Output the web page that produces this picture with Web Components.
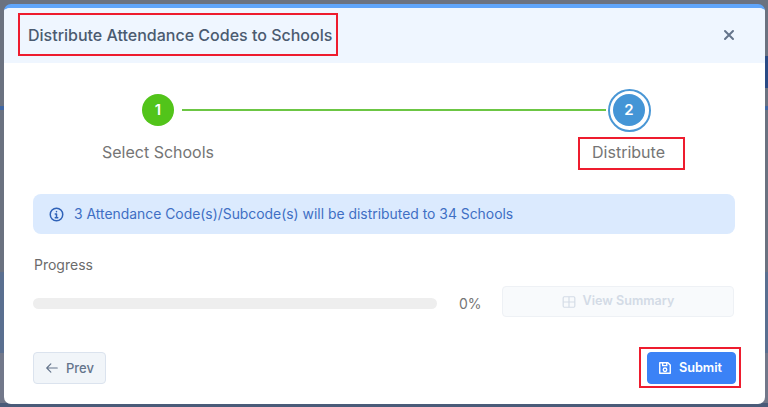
<!DOCTYPE html>
<html><head><meta charset="utf-8"><style>
html,body{margin:0;padding:0;height:407px;overflow:hidden}
body{font-family:Inter,"Noto Sans",sans-serif;background:#6b7280}
</style></head><body>
<app-backdrop>
<dist-modal>
<step-bar slot="steps"></step-bar>
<info-alert slot="alert">3 Attendance Code(s)/Subcode(s) will be distributed to 34 Schools</info-alert>
<progress-row slot="progress"></progress-row>
<ui-btn slot="prev" kind="prev" style="margin-top:5px"><svg slot="icon" width="14" height="14" viewBox="0 0 24 24" fill="none" stroke="currentColor" stroke-width="2" stroke-linecap="round" stroke-linejoin="round"><path d="M21 12H3M10 5l-7 7 7 7"/></svg>Prev</ui-btn>
<mark-box slot="submit" style="padding:3px 3px 2px 6px;margin-right:-6px"><ui-btn kind="primary" style="padding-right:3px"><svg slot="icon" width="14" height="14" viewBox="0 0 24 24" fill="none" stroke="currentColor" stroke-width="2.4" stroke-linejoin="round"><path d="M3 3h14l4 4v14H3z"/><path d="M8 3v5h7V3"/><circle cx="12" cy="15" r="3"/></svg>Submit</ui-btn></mark-box>
</dist-modal>
</app-backdrop>
<script>
function def(name,html){
  customElements.define(name,class extends HTMLElement{
    constructor(){super();this.attachShadow({mode:'open'}).innerHTML=html;}
  });
}
def('app-backdrop',`<style>:host{display:block;box-sizing:border-box;width:768px;height:407px;padding:4px 3px 3px 4px;
background:
 linear-gradient(#2a4a84 0 0) right 0 top 56px/4px 32px no-repeat,
 linear-gradient(#6b7280 0 106px,#3f66a3 106px 110px,#6b7280 110px 272px,#5a6f90 272px 353px,#72788a 353px 403px,#4a5b79 403px 407px)}</style><slot></slot>`);
def('dist-modal',`<style>
:host{display:flex;flex-direction:column;height:399.5px;background:#fff;border-radius:7px;overflow:hidden;border-top:4px solid #60a5fa;box-sizing:border-box}
header{flex:none;height:55px;background:#eff6ff;display:flex;align-items:center;justify-content:space-between;padding:0 30.5px 0 14px;box-sizing:border-box}
h1{margin:0;font:500 16px/16px Inter,sans-serif;color:#4b5b70;white-space:nowrap}
.x{color:#64748b;display:flex;margin-bottom:2px}
main{flex:1;display:flex;flex-direction:column;padding:25px 30px 0 29px}
::slotted([slot=alert]){margin-top:24px}
::slotted([slot=progress]){margin-top:21px}
footer{display:flex;justify-content:space-between;align-items:flex-start;margin-top:30px}
</style>
<header><mark-box style="padding:11.5px 3.5px 11.5px 8px;margin-bottom:2px"><h1>Distribute Attendance Codes to Schools</h1></mark-box>
<span class="x"><svg width="12" height="12" viewBox="0 0 12 12" fill="none" stroke="currentColor" stroke-width="2" stroke-linecap="round"><path d="M2 2l8 8M10 2l-8 8"/></svg></span></header>
<main><slot name="steps"></slot><slot name="alert"></slot><slot name="progress"></slot>
<footer><slot name="prev"></slot><slot name="submit"></slot></footer></main>`);
def('mark-box',`<style>:host{display:inline-flex;border:2px solid #ee1c2e;box-sizing:border-box}</style><slot></slot>`);
def('step-bar',`<style>
:host{display:grid;grid-template-columns:110px 1fr 110px;grid-template-rows:44px auto;margin:0 0 0 70px;width:581px;row-gap:10px;justify-items:center;align-items:start;font:400 16px/20px Inter,sans-serif;color:#757575}
.dot{width:32px;height:32px;border-radius:50%;display:flex;align-items:center;justify-content:center;color:#fff;font-weight:600;font-size:15px;align-self:center}
.g{background:#52c41a}
.ring{width:43px;height:43px;border:2px solid #4a97d5;border-radius:50%;box-sizing:border-box;display:flex;align-items:center;justify-content:center;align-self:center}
.b{background:#4495d6}
.line{height:2px;background:#6cc644;align-self:center;justify-self:stretch;margin:0 -32px 0 -31px}
.lab{white-space:nowrap}
.m{margin:-5px 0 0 5px;padding:3px 18px 6px 12px;white-space:nowrap}
</style>
<div class="dot g">1</div><div class="line"></div><div class="ring"><div class="dot b">2</div></div>
<div class="lab">Select Schools</div><div></div><mark-box class="m"><span>Distribute</span></mark-box>`);
def('info-alert',`<style>:host{display:flex;align-items:center;gap:10px;height:40px;box-sizing:border-box;padding:0 16px;background:#dbeafe;border-radius:8px;color:#3f6fc4;font:400 13.9px/20px Inter,sans-serif}
svg{flex:none}</style><svg width="15" height="15" viewBox="0 0 24 24" fill="none" stroke="#2f62b8" stroke-width="2.4" stroke-linecap="round"><circle cx="12" cy="12" r="10"/><path d="M12 11v6M12 7v.5M10 11h2M10 17h4"/></svg><span><slot></slot></span>`);
def('progress-row',`<style>:host{display:block;font:400 14px/20px Inter,sans-serif;color:#6b6b6b}
.r{display:flex;align-items:center;margin-top:11px}
.bar{width:404px;height:11px;border-radius:6px;background:#eeeeee;margin-top:3px}
.p{width:65px;text-align:right;padding-right:20.5px;box-sizing:border-box;margin-top:5px;color:#757575}
.l{margin-left:1px}
</style><div class="l">Progress</div><div class="r"><div class="bar"></div><div class="p">0%</div><ui-btn kind="disabled" style="width:232px"><svg slot="icon" width="14" height="14" viewBox="0 0 24 24" fill="none" stroke="currentColor" stroke-width="2"><rect x="2" y="3" width="20" height="18" rx="2"/><path d="M2 12h20M12 3v18"/></svg>View Summary</ui-btn></div>`);
customElements.define('ui-btn',class extends HTMLElement{
  constructor(){super();
  this.attachShadow({mode:'open'}).innerHTML=`<style>
:host{display:inline-flex;align-items:center;justify-content:center;gap:7px;box-sizing:border-box;height:32px;border-radius:4px;font:500 13px/1 Inter,sans-serif;border:1px solid}
:host([kind=prev]){width:73px;background:#f1f5f9;border-color:#dbe3ee;color:#64748b}
:host([kind=primary]){width:89px;background:#3b82f6;border-color:#3b82f6;color:#fff;font-weight:600;font-size:12.7px}
:host([kind=disabled]){height:31px;background:#f8fafc;border-color:#eef1f5;color:#d3dbe6;font-weight:600;font-size:12.6px}
::slotted(svg){flex:none}
</style><slot name="icon"></slot><slot></slot>`;}
});
</script>
</body></html>
